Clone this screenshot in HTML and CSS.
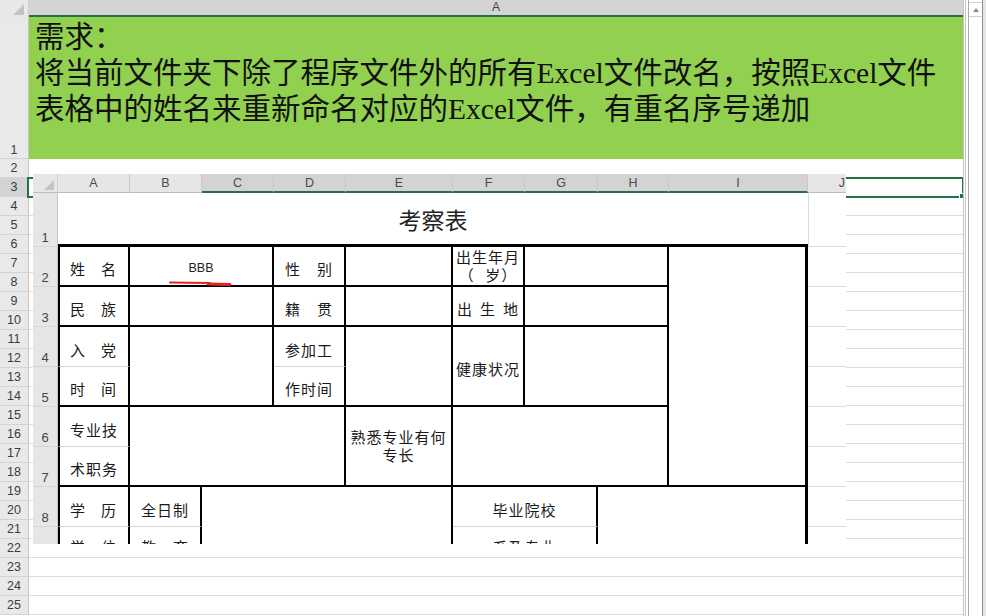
FILE: index.html
```html
<!DOCTYPE html>
<html lang="zh-CN">
<head>
<meta charset="utf-8">
<title>Excel 文件改名</title>
<link rel="stylesheet" href="styles.css">
</head>
<body>
<div class="app">
  <div class="sheet">
    <div class="colhead">
      <div class="corner"><span class="tri"></span></div>
      <div class="colname">A</div>
    </div>
    <div class="row r1">
      <div class="rh">1</div>
      <div class="cell note">需求：<br>将当前文件夹下除了程序文件外的所有<span class="lat">Excel</span>文件改名，按照<span class="lat">Excel</span>文件<br>表格中的姓名来重新命名对应的<span class="lat">Excel</span>文件，有重名序号递加</div>
    </div>
    <div class="row"><div class="rh">2</div><div class="cell"></div></div>
    <div class="row rsel"><div class="rh">3</div><div class="cell"></div></div>
    <div class="row"><div class="rh">4</div><div class="cell"></div></div>
    <div class="row"><div class="rh">5</div><div class="cell"></div></div>
    <div class="row"><div class="rh">6</div><div class="cell"></div></div>
    <div class="row"><div class="rh">7</div><div class="cell"></div></div>
    <div class="row"><div class="rh">8</div><div class="cell"></div></div>
    <div class="row"><div class="rh">9</div><div class="cell"></div></div>
    <div class="row"><div class="rh">10</div><div class="cell"></div></div>
    <div class="row"><div class="rh">11</div><div class="cell"></div></div>
    <div class="row"><div class="rh">12</div><div class="cell"></div></div>
    <div class="row"><div class="rh">13</div><div class="cell"></div></div>
    <div class="row"><div class="rh">14</div><div class="cell"></div></div>
    <div class="row"><div class="rh">15</div><div class="cell"></div></div>
    <div class="row"><div class="rh">16</div><div class="cell"></div></div>
    <div class="row"><div class="rh">17</div><div class="cell"></div></div>
    <div class="row"><div class="rh">18</div><div class="cell"></div></div>
    <div class="row"><div class="rh">19</div><div class="cell"></div></div>
    <div class="row"><div class="rh">20</div><div class="cell"></div></div>
    <div class="row"><div class="rh">21</div><div class="cell"></div></div>
    <div class="row"><div class="rh">22</div><div class="cell"></div></div>
    <div class="row"><div class="rh">23</div><div class="cell"></div></div>
    <div class="row"><div class="rh">24</div><div class="cell"></div></div>
    <div class="row"><div class="rh">25</div><div class="cell"></div></div>

    <div class="selection"><span class="handle"></span></div>

    <div class="picture">
      <div class="pc"><span class="tri small"></span></div>
      <div class="pch">A</div>
      <div class="pch">B</div>
      <div class="pch on">C</div>
      <div class="pch on">D</div>
      <div class="pch on">E</div>
      <div class="pch on">F</div>
      <div class="pch on">G</div>
      <div class="pch on">H</div>
      <div class="pch on">I</div>
      <div class="pch cut">J</div>

      <div class="prn">1</div>
      <div class="title">考察表</div>
      <div class="j top"></div>

      <div class="prn">2</div>
      <div class="c a spread"><span>姓</span><span>名</span></div>
      <div class="c span2 name">BBB<svg class="mark" width="64" height="6" viewBox="0 0 64 6"><path d="M1 1.6 L41 2" stroke="#e2261c" stroke-width="2" stroke-linecap="round" fill="none"/><path d="M39 3 L61 3.4" stroke="#e2261c" stroke-width="3" stroke-linecap="round" fill="none"/></svg></div>
      <div class="c spread"><span>性</span><span>别</span></div>
      <div class="c"></div>
      <div class="c two">出生年月<br>（&nbsp;&nbsp;岁）</div>
      <div class="c span2"></div>
      <div class="c rows6 edge"></div>
      <div class="j"></div>

      <div class="prn">3</div>
      <div class="c a spread"><span>民</span><span>族</span></div>
      <div class="c span2"></div>
      <div class="c spread"><span>籍</span><span>贯</span></div>
      <div class="c"></div>
      <div class="c spread narrow"><span>出</span><span>生</span><span>地</span></div>
      <div class="c span2"></div>
      <div class="j"></div>

      <div class="prn">4</div>
      <div class="c a spread lb"><span>入</span><span>党</span></div>
      <div class="c span2 rows2"></div>
      <div class="c lb">参加工</div>
      <div class="c rows2"></div>
      <div class="c rows2">健康状况</div>
      <div class="c span2 rows2"></div>
      <div class="j"></div>

      <div class="prn">5</div>
      <div class="c a spread"><span>时</span><span>间</span></div>
      <div class="c">作时间</div>
      <div class="j"></div>

      <div class="prn">6</div>
      <div class="c a lb">专业技</div>
      <div class="c span3 rows2"></div>
      <div class="c rows2 two">熟悉专业有何<br>专长</div>
      <div class="c span3 rows2"></div>
      <div class="j"></div>

      <div class="prn">7</div>
      <div class="c a">术职务</div>
      <div class="j"></div>

      <div class="prn">8</div>
      <div class="c a spread lb"><span>学</span><span>历</span></div>
      <div class="c lb">全日制</div>
      <div class="c span3 rows2"></div>
      <div class="c span2 lb">毕业院校</div>
      <div class="c span2 rows2 edge"></div>
      <div class="j"></div>

      <div class="prn"></div>
      <div class="c a spread clip"><span>学</span><span>位</span></div>
      <div class="c spread clip"><span>教</span><span>育</span></div>
      <div class="c span2 clip">系及专业</div>
      <div class="j"></div>
    </div>
  </div>
  <div class="vscroll">
    <div class="track"><div class="up"></div></div>
    <div class="vedge"></div>
  </div>
</div>
</body>
</html>
```

FILE: styles.css
```css
* { box-sizing: border-box; }
html, body { margin: 0; padding: 0; }
body {
  width: 986px;
  height: 616px;
  overflow: hidden;
  background: #fff;
  font-family: "Liberation Sans", "Noto Sans CJK SC", sans-serif;
}
.app { display: flex; width: 986px; height: 616px; }

/* ---------- outer sheet ---------- */
.sheet {
  position: relative;
  width: 966px;
  height: 616px;
  border-right: 3px double #c4c4c4;
  display: flex;
  flex-direction: column;
  overflow: hidden;
}
.colhead { display: flex; height: 17px; flex: none; }
.corner {
  width: 29px;
  flex: none;
  background: #e8e8e8;
  border-right: 1px solid #cfcfcf;
  display: flex;
  align-items: flex-end;
  justify-content: flex-end;
  padding: 0 4px 2px 0;
}
.tri {
  width: 0;
  height: 0;
  border-left: 11px solid transparent;
  border-bottom: 11px solid #c3c3c3;
}
.tri.small { border-left-width: 10px; border-bottom-width: 10px; }
.colname {
  flex: 1;
  background: #d4d4d4;
  border-bottom: 2px solid #217346;
  display: flex;
  justify-content: center;
  align-items: flex-end;
  font-size: 12px;
  line-height: 13px;
  padding-bottom: 1px;
  color: #444;
}
.row { display: flex; height: 19px; flex: none; }
.rh {
  width: 29px;
  flex: none;
  background: #e9e9e9;
  border-right: 1px solid #c6c6c6;
  border-bottom: 1px solid #d3d3d3;
  display: flex;
  align-items: center;
  justify-content: center;
  font-size: 12.5px;
  color: #3c3c3c;
}
.rsel .rh { background: #d3d3d3; }
.cell { flex: 1; border-bottom: 1px solid #dcdcdc; }
.r1 { height: 142px; }
.r1 .rh { align-items: flex-end; padding-bottom: 1px; }
.note {
  background: #92d050;
  border-bottom: none;
  padding: 2px 0 0 6px;
  font-family: "Liberation Serif", "Noto Sans CJK SC", serif;
  font-size: 29.5px;
  line-height: 36px;
  color: #111;
  white-space: nowrap;
}

.selection {
  position: absolute;
  left: 27px;
  top: 177px;
  width: 937px;
  height: 21px;
  border: 2px solid #217346;
}
.handle {
  position: absolute;
  right: -3px;
  bottom: -3px;
  width: 6px;
  height: 6px;
  background: #217346;
  border: 1px solid #fff;
}

/* ---------- embedded picture ---------- */
.picture {
  position: absolute;
  left: 33px;
  top: 174px;
  width: 813px;
  height: 370px;
  overflow: hidden;
  background: #fff;
  display: grid;
  grid-template-columns: 25px 72px 72px 72px 72px 107px 72px 73px 71px 139px 38px;
  grid-template-rows: 19px 54px repeat(8, 40px);
  font-family: "Noto Sans CJK SC", sans-serif;
  color: #1a1a1a;
}
.pc {
  background: #e6e6e6;
  border-right: 1px solid #d0d0d0;
  border-bottom: 1px solid #bdbdbd;
  display: flex;
  align-items: flex-end;
  justify-content: flex-end;
  padding: 0 3px 2px 0;
}
.pch {
  background: #e6e6e6;
  border-right: 1px solid #c9c9c9;
  border-bottom: 1px solid #bdbdbd;
  display: flex;
  align-items: center;
  justify-content: center;
  font-family: "Liberation Sans", sans-serif;
  font-size: 12.5px;
  color: #4a4a4a;
}
.pch.on { background: #d3d3d3; border-bottom: 2px solid #217346; }
.pch.cut { justify-content: flex-end; padding-right: 1px; border-right: none; }
.prn {
  background: #e6e6e6;
  border-right: 1px solid #c4c4c4;
  border-bottom: 1px solid #d6d6d6;
  display: flex;
  align-items: flex-end;
  justify-content: center;
  padding-bottom: 1px;
  font-family: "Liberation Sans", sans-serif;
  font-size: 13px;
  line-height: 14px;
  color: #444;
}
.title {
  grid-column: span 9;
  display: flex;
  align-items: center;
  justify-content: center;
  font-size: 23px;
  color: #222;
  border-bottom: 3px solid #000;
}
.j { border-bottom: 1px solid #dcdcdc; }
.j.top { border-left: 1px solid #dcdcdc; }

.c {
  position: relative;
  border-right: 2px solid #000;
  border-bottom: 2px solid #000;
  display: flex;
  align-items: center;
  justify-content: center;
  text-align: center;
  padding-top: 5px;
  font-size: 15px;
  line-height: 17px;
  letter-spacing: 1px;
}
.c.two {
  font-family: "Liberation Sans", "Noto Sans CJK SC", sans-serif;
  line-height: 18px;
  padding-top: 2px;
}
.c.a { border-left: 2px solid #000; }
.c.lb { border-bottom: 1px solid #d4d4d4; }
.c.edge { border-right-width: 3px; }
.c.spread { justify-content: space-between; padding-left: 11px; padding-right: 11px; }
.c.a.spread { padding-left: 10px; }
.c.narrow { padding-left: 4px; padding-right: 4px; }
.c.clip { padding-top: 0; }
.span2 { grid-column: span 2; }
.span3 { grid-column: span 3; }
.rows2 { grid-row: span 2; }
.rows6 { grid-row: span 6; }
.name {
  font-family: "Liberation Sans", sans-serif;
  font-size: 12.5px;
  letter-spacing: 0;
  color: #222;
}
.mark { position: absolute; left: 39px; top: 34px; }

/* ---------- scrollbar ---------- */
.vscroll { width: 20px; display: flex; background: #fff; }
.track {
  margin-left: 2px;
  width: 15px;
  border-left: 1px solid #a9a9a9;
  border-right: 1px solid #8c8c8c;
  padding-top: 2px;
}
.up {
  height: 15px;
  border-top: 1px solid #cfcfcf;
  border-bottom: 1px solid #cfcfcf;
  display: flex;
  align-items: center;
  justify-content: center;
}
.up::after {
  content: "";
  width: 0;
  height: 0;
  border-left: 3.5px solid transparent;
  border-right: 3.5px solid transparent;
  border-bottom: 4px solid #8a8a8a;
}
.vedge { flex: 1; background: #e6e6e6; }
```
